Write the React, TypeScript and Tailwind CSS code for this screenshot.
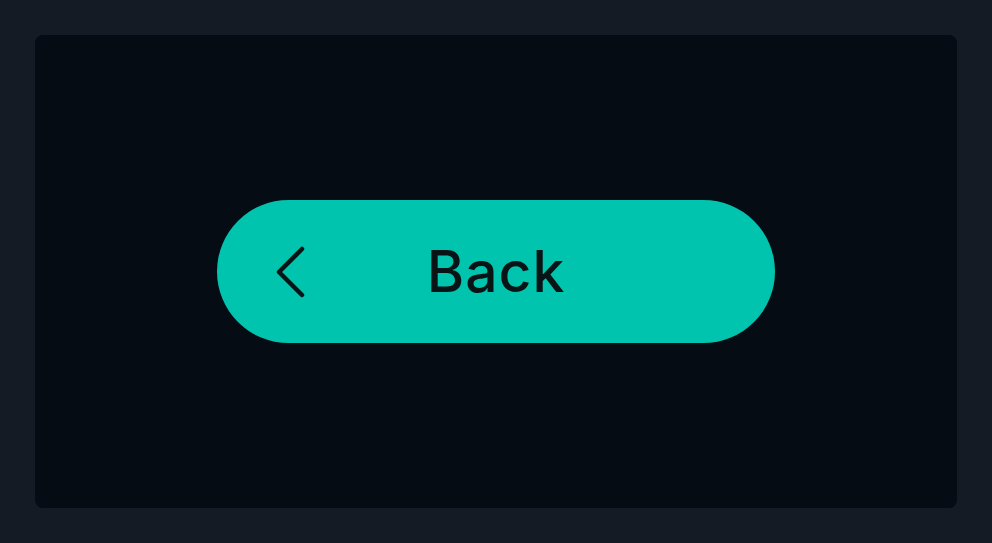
export default function App() {
  return (
    <div className="h-[543px] w-[992px] bg-[#141b24] p-[35px]">
      <div className="flex h-full w-full items-center justify-center rounded-lg bg-[#050c14]">
        <button className="relative flex h-[143px] w-[558px] items-center justify-center rounded-full bg-[#00c4ad] text-[#081416]">
          <svg
            className="absolute left-[56px] top-1/2 -translate-y-1/2"
            width="34"
            height="56"
            viewBox="0 0 34 56"
            fill="none"
            stroke="currentColor"
            strokeWidth="4.5"
            strokeLinecap="round"
            strokeLinejoin="round"
          >
            <path d="M29 5 L6 28 L29 51" />
          </svg>
          <span className="font-['Inter',sans-serif] text-[57px] font-medium leading-none tracking-[1px]">
            Back
          </span>
        </button>
      </div>
    </div>
  );
}
